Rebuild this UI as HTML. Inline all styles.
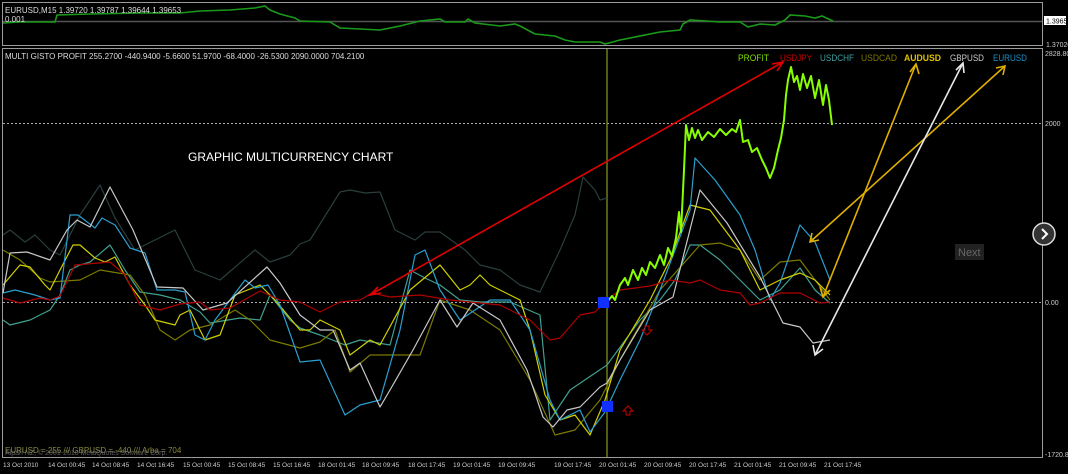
<!DOCTYPE html>
<html><head><meta charset="utf-8"><style>
html,body{margin:0;padding:0;background:#000;width:1068px;height:474px;overflow:hidden}
svg{display:block}
text{font-family:"Liberation Sans",sans-serif}
</style></head><body>
<svg width="1068" height="474" viewBox="0 0 1068 474" xmlns="http://www.w3.org/2000/svg">
<rect width="1068" height="474" fill="#000"/>
<rect x="2.5" y="2.5" width="1040" height="43" fill="none" stroke="#9a9a9a" stroke-width="1"/>
<line x1="3" y1="21.5" x2="1042" y2="21.5" stroke="#555" stroke-width="1.5"/>
<polyline fill="none" stroke="#1a9a1a" stroke-width="1.6" points="3,23 20,22 40,22 55,22 57,15 90,14 140,13 180,13 200,11 230,10 255,8 265,6 270,10 280,14 295,18 300,21 330,22 340,28 360,29 380,30 400,26 420,21 440,19 445,22 465,22 468,19 475,23 500,26 515,24 520,26 535,34 555,36 565,40 575,42 600,42 605,44 620,40 660,32 680,30 683,24 690,20 720,22 740,22 748,27 760,24 775,25 785,20 790,15 805,16 815,18 822,16 833,21"/>
<text x="5" y="13" fill="#ddd" font-size="8">EURUSD,M15  1.39720 1.39787 1.39644 1.39653</text>
<text x="5" y="22" fill="#ddd" font-size="8">0.001</text>
<rect x="1044" y="16" width="22" height="9" fill="#fff"/>
<text x="1046" y="23.5" fill="#000" font-size="7">1.39653</text>
<text x="1046" y="47" fill="#ccc" font-size="7">1.37020</text>
<rect x="2.5" y="48.5" width="1040" height="409" fill="none" stroke="#9a9a9a" stroke-width="1"/>
<text x="5" y="59" fill="#ddd" font-size="8">MULTI GISTO PROFIT 255.2700 -440.9400 -5.6600 51.9700 -68.4000 -26.5300 2090.0000 704.2100</text>
<text x="1045" y="56" fill="#ccc" font-size="7">2828.80</text>
<text x="1045" y="126" fill="#ccc" font-size="7">2000</text>
<text x="1045" y="305" fill="#ccc" font-size="7">0.00</text>
<text x="1045" y="457" fill="#ccc" font-size="7">-1720.8</text>
<line x1="3" y1="123.5" x2="1042" y2="123.5" stroke="#aaa" stroke-width="1" stroke-dasharray="2,2"/>
<line x1="3" y1="302.5" x2="1042" y2="302.5" stroke="#aaa" stroke-width="1" stroke-dasharray="2,2"/>
<line x1="607" y1="49" x2="607" y2="457" stroke="#8a9a20" stroke-width="1.2"/>
<g font-size="9.5" font-family="Liberation Serif">
<text x="738" y="61" fill="#7fdf00" textLength="31" lengthAdjust="spacingAndGlyphs">PROFIT</text>
<text x="780" y="61" fill="#d00000" textLength="32" lengthAdjust="spacingAndGlyphs">USDJPY</text>
<text x="820" y="61" fill="#40a0a0" textLength="34" lengthAdjust="spacingAndGlyphs">USDCHF</text>
<text x="861" y="61" fill="#807800" textLength="36" lengthAdjust="spacingAndGlyphs">USDCAD</text>
<text x="904" y="61" fill="#e0c000" font-weight="bold" textLength="37" lengthAdjust="spacingAndGlyphs">AUDUSD</text>
<text x="950" y="61" fill="#ccc" textLength="34" lengthAdjust="spacingAndGlyphs">GBPUSD</text>
<text x="993" y="61" fill="#1a90c8" textLength="34" lengthAdjust="spacingAndGlyphs">EURUSD</text>
</g>
<text x="188" y="161" fill="#fff" font-size="12">GRAPHIC MULTICURRENCY CHART</text>
<g fill="none" stroke-width="1.2" stroke-linejoin="round">
<polyline stroke="#2a3e3e" points="3,235 10,230 25,242 35,235 50,250 60,255 80,215 100,185 115,218 135,250 175,230 195,270 220,280 255,250 270,262 290,255 300,244 310,240 340,192 350,190 365,193 380,192 395,230 415,240 425,232 440,232 465,250 480,265 500,270 520,285 540,292 560,250 575,215 583,177 595,190 600,200 607,198"/>
<polyline stroke="#40a090" points="3,320 10,325 30,320 50,310 60,295 70,270 80,265 90,262 110,245 125,270 140,292 160,295 180,300 200,312 210,323 240,318 260,320 270,295 290,320 300,328 320,335 345,345 360,340 390,345 410,270 425,278 440,285 460,300 480,302 510,302 540,315 550,420 570,390 607,365 640,320 660,300 675,280 690,245 700,245 720,260 760,300 780,290 800,268 815,290 830,303"/>
<polyline stroke="#7a7a00" points="3,250 20,260 40,278 50,282 80,280 100,270 130,275 145,295 160,330 175,340 190,330 210,325 235,310 250,320 270,340 300,348 320,342 335,330 350,372 370,355 395,355 420,355 440,300 470,310 500,330 530,380 555,435 575,430 600,400 620,360 640,325 660,290 700,245 720,243 740,250 760,280 780,262 800,260 815,280 830,300"/>
<polyline stroke="#d0d000" points="3,285 20,265 30,267 45,285 50,290 60,270 73,245 80,245 95,258 105,262 115,257 130,285 145,305 155,320 175,325 180,315 190,310 205,340 220,335 235,295 260,285 275,300 300,330 310,330 320,320 340,330 350,355 370,340 380,345 410,290 440,265 460,290 470,285 480,275 490,285 520,300 530,330 545,395 560,420 575,415 590,435 605,400 620,350 650,300 670,260 690,205 710,210 740,250 760,290 780,280 800,273 815,280 830,295"/>
<polyline stroke="#2a9fd0" points="3,293 15,290 35,295 50,300 60,298 70,215 78,215 95,228 102,218 115,225 130,248 145,253 157,290 175,290 185,292 195,335 205,340 215,320 245,280 255,288 268,285 280,305 300,362 320,360 345,415 360,405 380,400 400,330 415,255 425,250 440,290 460,320 490,300 510,300 530,330 550,400 560,420 580,410 590,432 605,412 620,380 640,340 660,290 690,210 695,158 715,180 740,215 755,250 770,300 780,283 800,225 815,242 830,280"/>
<polyline stroke="#c8c8c8" points="3,293 10,253 27,252 50,260 67,230 77,220 90,227 110,187 133,230 157,287 183,288 203,310 227,303 267,267 280,283 300,315 320,330 333,330 350,370 360,363 380,407 390,390 413,350 440,300 457,327 473,303 500,320 527,370 543,417 553,427 567,410 580,407 600,387 607,383 620,360 650,310 673,297 700,190 727,223 760,277 783,323 800,327 813,343 830,340"/>
<polyline stroke="#b00000" points="3,298 20,303 40,298 50,300 60,296 75,265 110,262 125,275 140,305 160,310 180,304 200,302 210,310 230,308 260,291 280,300 300,302 320,312 340,302 360,300 372,293 390,297 420,295 450,300 480,303 500,305 530,320 550,340 560,338 580,315 595,312 607,300 620,290 650,286 670,280 690,283 700,280 720,290 740,293 750,305 760,303 780,293 800,293 820,303 830,302"/>
<polyline stroke="#88ff00" stroke-width="2" points="607,302 612,296 615,300 620,285 625,278 628,285 633,270 638,280 642,268 646,275 650,262 655,268 660,255 664,265 668,248 672,256 676,238 679,212 681,232 684,170 686,125 689,140 692,128 695,138 698,130 702,140 708,132 714,137 720,129 726,135 732,129 736,132 740,120 743,142 748,140 752,152 757,148 762,160 766,168 770,178 774,168 778,150 781,138 784,120 786,95 788,80 791,67 794,82 797,76 800,90 803,74 807,88 811,76 815,98 819,80 823,105 826,85 829,100 832,125"/>
</g>
<g stroke-width="1.6" fill="none">
<line x1="370" y1="295" x2="783" y2="62" stroke="#e00000"/>
<polyline points="378,287 370,295 381,293" stroke="#e00000"/>
<polyline points="772,64 783,62 777,71" stroke="#e00000"/>
<line x1="810" y1="242" x2="1005" y2="66" stroke="#e0b000"/>
<polyline points="812,233 810,242 819,240" stroke="#e0b000"/>
<polyline points="996,68 1005,66 1003,75" stroke="#e0b000"/>
<line x1="823" y1="297" x2="916" y2="64" stroke="#e0b000"/>
<polyline points="820,287 823,297 830,290" stroke="#e0b000"/>
<polyline points="910,72 916,64 919,74" stroke="#e0b000"/>
<line x1="815" y1="355" x2="963" y2="63" stroke="#e8e8e8"/>
<polyline points="813,345 815,355 823,349" stroke="#e8e8e8"/>
<polyline points="956,70 963,63 964,73" stroke="#e8e8e8"/>
</g>
<rect x="598" y="297" width="11" height="11" fill="#1030ff"/>
<rect x="602" y="401" width="11" height="11" fill="#1030ff"/>
<path d="M645,326 h4 v4 h3 l-5,5 l-5,-5 h3 z" fill="none" stroke="#c00000" stroke-width="1"/>
<path d="M626,415 h4 v-4 h3 l-5,-5 l-5,5 h3 z" fill="none" stroke="#c00000" stroke-width="1"/>
<rect x="955" y="244" width="29" height="16" fill="#222"/>
<text x="958" y="256" fill="#666" font-size="11">Next</text>
<circle cx="1044" cy="234" r="11" fill="#333" stroke="#ddd" stroke-width="1.5"/>
<polyline points="1042,229 1047,234 1042,239" fill="none" stroke="#fff" stroke-width="2"/>
<text x="5" y="453" fill="#8a8a40" font-size="8">EURUSD = 255 /// GBPUSD = -440 /// Arba = 704</text>
<text x="5" y="455" fill="#777" font-size="7" opacity="0.8">Alpari NZ, © 2001-2010 MetaQuotes Software Corp.</text>
<g fill="#ccc" font-size="6.5">
<text x="3" y="467">13 Oct 2010</text><text x="48" y="467">14 Oct 00:45</text><text x="92" y="467">14 Oct 08:45</text><text x="137" y="467">14 Oct 16:45</text><text x="183" y="467">15 Oct 00:45</text><text x="228" y="467">15 Oct 08:45</text><text x="273" y="467">15 Oct 16:45</text><text x="318" y="467">18 Oct 01:45</text><text x="362" y="467">18 Oct 09:45</text><text x="408" y="467">18 Oct 17:45</text><text x="453" y="467">19 Oct 01:45</text><text x="498" y="467">19 Oct 09:45</text><text x="554" y="467">19 Oct 17:45</text><text x="599" y="467">20 Oct 01:45</text><text x="644" y="467">20 Oct 09:45</text><text x="689" y="467">20 Oct 17:45</text><text x="734" y="467">21 Oct 01:45</text><text x="779" y="467">21 Oct 09:45</text><text x="824" y="467">21 Oct 17:45</text>
</g>
</svg>
</body></html>
